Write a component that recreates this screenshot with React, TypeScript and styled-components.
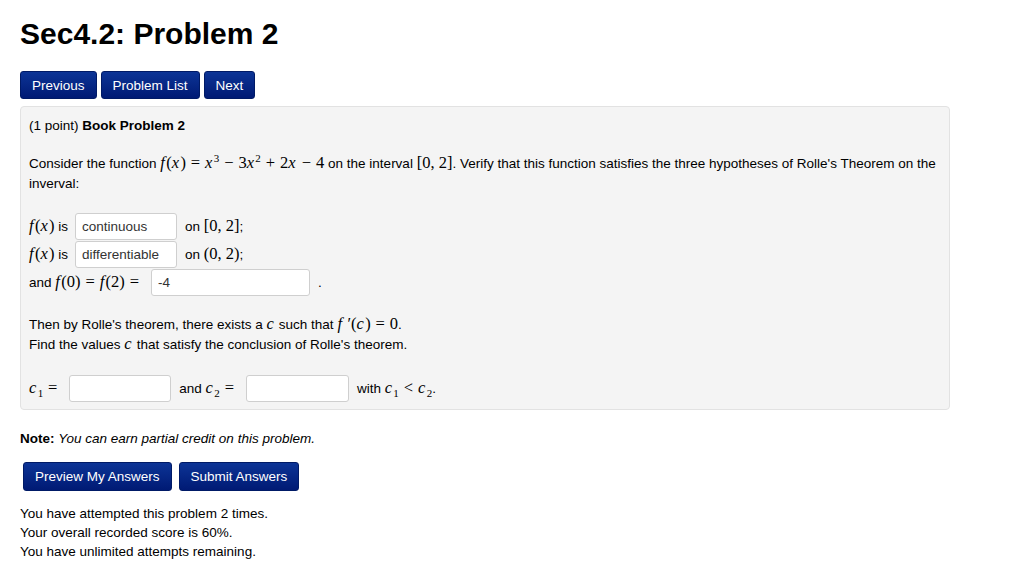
import styled, { createGlobalStyle } from 'styled-components';

const GlobalStyle = createGlobalStyle`
	body {
		margin: 0;
		background: #fff;
		color: #000;
		font-family: "Liberation Sans", Arial, sans-serif;
		font-size: 13.5px;
	}
`;

function App() {
	return (
		<Page>
			<GlobalStyle />
			<Title>Sec4.2: Problem 2</Title>
			<NavBar>
				<NavButton>Previous</NavButton>
				<NavButton>Problem List</NavButton>
				<NavButton>Next</NavButton>
			</NavBar>

			<ProblemBox>
				<Para>
					(1 point) <b>Book Problem 2</b>
				</Para>
				<Para>
					Consider the function{' '}
					<M>
						<i>f</i>(<i>x</i>)<Rel>=</Rel>
						<i>x</i>
						<sup>3</sup>
						<Bin>−</Bin>3<i>x</i>
						<sup>2</sup>
						<Bin>+</Bin>2<i>x</i>
						<Bin>−</Bin>4
					</M>{' '}
					on the interval <M>[0, 2]</M>. Verify that this function satisfies the three hypotheses of Rolle's
					Theorem on the inverval:
				</Para>

				<Rows>
					<Row>
						<M>
							<i>f</i>(<i>x</i>)
						</M>
						&nbsp;is
						<Field $width={102} defaultValue="continuous" />
						on <M>[0, 2]</M>;
					</Row>
					<Row>
						<M>
							<i>f</i>(<i>x</i>)
						</M>
						&nbsp;is
						<Field $width={102} defaultValue="differentiable" />
						on <M>(0, 2)</M>;
					</Row>
					<Row>
						and&nbsp;
						<M>
							<i>f</i>(0)<Rel>=</Rel>
							<i>f</i>(2)<Rel>=</Rel>
						</M>
						<Field $width={159} defaultValue="-4" />.
					</Row>
				</Rows>

				<Para $after={19}>
					Then by Rolle's theorem, there exists a <M><i>c</i></M> such that{' '}
					<M>
						<i>f</i> ′(<i>c</i>)<Rel>=</Rel>0
					</M>
					.
					<br />
					Find the values <M><i>c</i></M> that satisfy the conclusion of Rolle's theorem.
				</Para>

				<Row>
					<M>
						<i>c</i>
						<sub>1</sub>
						<Rel>=</Rel>
					</M>
					<Field $width={102} />
					and&nbsp;
					<M>
						<i>c</i>
						<sub>2</sub>
						<Rel>=</Rel>
					</M>
					<Field $width={103} />
					with&nbsp;
					<M>
						<i>c</i>
						<sub>1</sub>
						<Rel>&lt;</Rel>
						<i>c</i>
						<sub>2</sub>
					</M>
					.
				</Row>
			</ProblemBox>

			<Note>
				<b>Note:</b> <i>You can earn partial credit on this problem.</i>
			</Note>

			<SubmitBar>
				<NavButton>Preview My Answers</NavButton>
				<NavButton>Submit Answers</NavButton>
			</SubmitBar>

			<Status>
				You have attempted this problem 2 times.
				<br />
				Your overall recorded score is 60%.
				<br />
				You have unlimited attempts remaining.
			</Status>
		</Page>
	);
}

const Page = styled.div`
	padding: 14px 20px 0;
	width: 930px;
`;

const Title = styled.h1`
	margin: 0 0 17px;
	font-size: 30px;
	line-height: 40px;
	font-weight: bold;
`;

const NavBar = styled.div`
	display: flex;
	gap: 4px;
	margin-bottom: 7px;
`;

const NavButton = styled.button`
	height: 28px;
	padding: 0 11px;
	border: 1px solid #001a66;
	border-radius: 3px;
	background: linear-gradient(#0c3496, #001a74);
	color: #fff;
	font-family: "Liberation Sans", Arial, sans-serif;
	font-size: 13.5px;
	cursor: pointer;
`;

const ProblemBox = styled.div`
	box-sizing: border-box;
	width: 930px;
	height: 304px;
	padding: 9px 8px 8px;
	background: #f4f4f4;
	border: 1px solid #e2e2e2;
	border-radius: 4px;
`;

const Para = styled.p<{ $after?: number }>`
	margin: 0 0 ${p => p.$after ?? 18}px;
	line-height: 20px;
`;

const M = styled.span`
	font-family: "Liberation Serif", "Times New Roman", serif;
	font-size: 16.5px;
	line-height: 1;
	white-space: nowrap;

	i {
		padding-right: 0.08em;
	}

	sup,
	sub {
		font-size: 11px;
		line-height: 0;
	}
`;

const Rel = styled.span`
	margin: 0 0.3em;
`;

const Bin = styled.span`
	margin: 0 0.3em;
`;

const Rows = styled.div`
	display: flex;
	flex-direction: column;
	margin: 0 0 19px;
`;

const Row = styled.div`
	display: flex;
	align-items: center;
	height: 28px;
	white-space: pre;
`;

const Field = styled.input<{ $width: number }>`
	box-sizing: border-box;
	width: ${p => p.$width}px;
	height: 27px;
	margin: 0 8px 0 7px;
	padding: 0 6px;
	border: 1px solid #cfcfcf;
	border-radius: 3px;
	background: #fff;
	font-family: "Liberation Sans", Arial, sans-serif;
	font-size: 13.5px;
	color: #333;
`;

const Note = styled.p`
	margin: 22px 0 0;
	line-height: 14px;
`;

const SubmitBar = styled.div`
	display: flex;
	gap: 7px;
	margin: 16px 0 0 3px;

	button {
		height: 29px;
	}
`;

const Status = styled.p`
	margin: 13px 0 0;
	line-height: 19px;
`;

export default App;
